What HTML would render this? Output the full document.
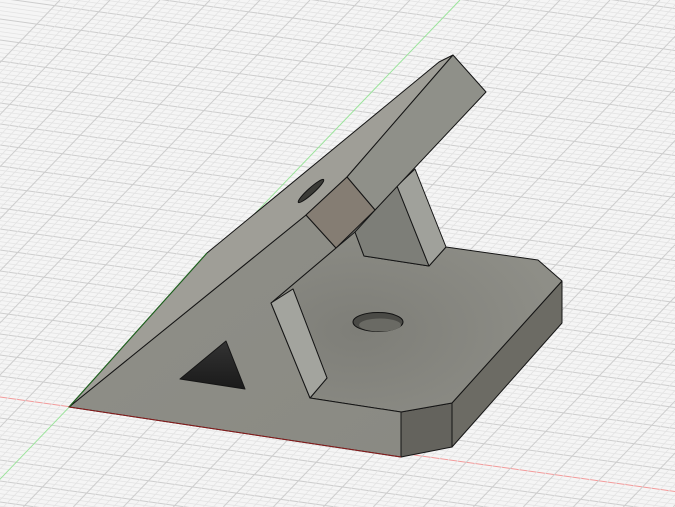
<!DOCTYPE html>
<html><head><meta charset="utf-8"><style>
html,body{margin:0;padding:0;background:#f5f5f5;overflow:hidden;width:675px;height:507px}
svg{display:block}
</style></head><body>
<svg id="s" width="675" height="507" viewBox="0 0 675 507" xmlns="http://www.w3.org/2000/svg">
<defs>
<linearGradient id="gf" x1="0" y1="0" x2="1" y2="1"><stop offset="0" stop-color="#8f8f88"/><stop offset="1" stop-color="#8a8a83"/></linearGradient>
<radialGradient id="gt" cx="0.3" cy="0.55" r="0.7"><stop offset="0" stop-color="#7e7e78"/><stop offset="1" stop-color="#8e8e87"/></radialGradient>
<linearGradient id="gh" x1="0" y1="0" x2="0" y2="1"><stop offset="0" stop-color="#333"/><stop offset="1" stop-color="#1a1a1a"/></linearGradient>
</defs>
<g id="grid"></g>
<polygon points="336,248 375,210 446,247 364,256 310,398 271,303" fill="#85857f"/>
<g stroke="#151515" stroke-width="1" stroke-linejoin="round">
<!-- base right face -->
<polygon points="452,403 562,281 562,323 452,447" fill="#6c6b64"/>
<polygon points="401,412 452,403 452,447 401,457" fill="#64635d"/>
<!-- base top -->
<polygon points="310,398 401,412 452,403 562,281 538,260 446,247 429,266 364,256 355,232 336,248 271,303 293,289 327,378" fill="url(#gt)"/>
<!-- rib2 -->
<polygon points="355,232 397,186 429,266 364,256" fill="#7d7e78"/>
<polygon points="397,186 415,169 446,247 429,266" fill="#a0a19b"/>
<!-- front face of plate -->
<polygon points="69,407 306,215 336,248 271,303 310,398 401,412 401,457" fill="url(#gf)"/>
<!-- rib1 -->
<polygon points="271,303 293,289 327,378 310,398" fill="#a3a49e"/>
<!-- top light face -->
<polygon points="69,407 207,253 439,62 453,55 347,177 306,215" fill="#9f9e97"/>
<!-- arm right -->
<polygon points="453,55 486,92 375,210 347,177" fill="#8f9089"/>
<!-- brown square -->
<polygon points="347,177 375,210 336,248 306,215" fill="#857d73"/>
<!-- triangle hole -->
<polygon points="226,341 180,379 245,389" fill="url(#gh)"/>
</g>
<line x1="69" y1="407" x2="207" y2="253" stroke="#1f6a1f" stroke-width="1"/>
<line x1="69" y1="407" x2="401" y2="457" stroke="#8a1c1c" stroke-width="1"/>
<ellipse cx="378" cy="322" rx="25" ry="9.5" fill="#4a4a46" stroke="#111"/>
<ellipse cx="380" cy="325" rx="21" ry="6.5" fill="#6a6a64"/>
<ellipse cx="311" cy="191" rx="17" ry="3" transform="rotate(-42 311 191)" fill="#3a3a36" stroke="#111"/>
</svg>
<script>
var g=document.getElementById('grid'),ns='http://www.w3.org/2000/svg';
function L(x1,y1,x2,y2,c,w){var l=document.createElementNS(ns,'line');l.setAttribute('x1',x1);l.setAttribute('y1',y1);l.setAttribute('x2',x2);l.setAttribute('y2',y2);l.setAttribute('stroke',c);l.setAttribute('stroke-width',w);g.appendChild(l);}
for(var i=-120;i<=60;i++){var y0=397+i*4.2;var maj=(i%5==0);
 L(0,y0,675,y0+675*0.14,i==0?'#f29a9a':(maj?'#cdcdcd':'#e3e3e3'),maj?1:0.8);}
for(var j=-40;j<=140;j++){var c=460+j*10;var maj=(j%5==0);
 L(c,0,c-507*0.96,507,j==0?'#9be39b':(maj?'#cdcdcd':'#e3e3e3'),maj?1:0.8);}
</script>
</body></html>
